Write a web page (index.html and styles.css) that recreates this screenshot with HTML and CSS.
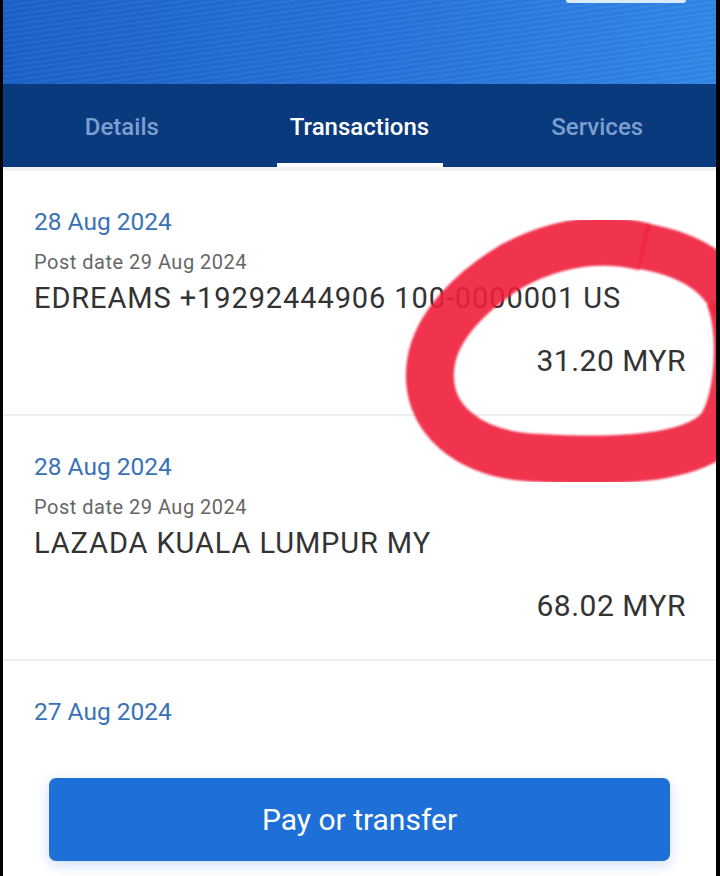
FILE: index.html
```html
<!DOCTYPE html>
<html lang="en">
<head>
    <meta charset="UTF-8">
    <meta name="viewport" content="width=device-width, initial-scale=1.0">
    <title>Card transactions</title>
    <link rel="stylesheet" href="styles.css">
</head>
<body>
    <div class="app">
        <header class="top">
            <div class="top-pill"></div>
        </header>
        <nav class="tabs">
            <a class="tab">Details</a>
            <a class="tab active">Transactions</a>
            <a class="tab">Services</a>
        </nav>
        <main class="list">
            <div class="row">
                <div class="date">28 Aug 2024</div>
                <div class="post">Post date 29 Aug 2024</div>
                <div class="merchant">EDREAMS +19292444906 100-0000001 US</div>
                <div class="amount">31.20 MYR</div>
            </div>
            <div class="row">
                <div class="date">28 Aug 2024</div>
                <div class="post">Post date 29 Aug 2024</div>
                <div class="merchant">LAZADA KUALA LUMPUR MY</div>
                <div class="amount">68.02 MYR</div>
            </div>
            <div class="row">
                <div class="date">27 Aug 2024</div>
            </div>
        </main>
        <footer class="actions">
            <button class="pay">Pay or transfer</button>
        </footer>

        <!-- hand drawn marker ring over the first amount -->
        <svg class="scribble" viewBox="3 0 713 876" width="713" height="876">
            <defs>
                <filter id="soft"><feGaussianBlur stdDeviation="1.3"/></filter>
            </defs>
            <g filter="url(#soft)" fill="none" stroke="#f0203c" stroke-opacity="0.9" stroke-linecap="butt" stroke-linejoin="round">
                <path stroke-width="48" d="M 645 247 C 600 236, 555 243, 512 266 C 472 290, 437 325, 431 362 C 422 418, 468 456, 540 458 C 612 462, 686 460, 717 432 C 740 408, 744 330, 729 296"/>
                <path stroke-width="46" d="M 744 330 C 730 280, 700 256, 642 246"/>
            </g>
        </svg>
    </div>
</body>
</html>
```

FILE: styles.css
```css
body {
    margin: 0;
    padding: 0;
    background: #000;
    font-family: Roboto, "Noto Sans", Arial, sans-serif;
}
.app {
    position: relative;
    width: 713px;
    height: 876px;
    margin-left: 3px;
    background: #fff;
    display: flex;
    flex-direction: column;
    overflow: hidden;
}
/* Cabecera azul */
.top {
    height: 84px;
    flex-shrink: 0;
    display: flex;
    justify-content: flex-end;
    align-items: flex-start;
    padding-right: 30px;
    box-sizing: border-box;
    background:
        repeating-linear-gradient(172deg, rgba(255, 255, 255, 0.03) 0 2px, rgba(0, 0, 0, 0.03) 2px 5px),
        linear-gradient(90deg, #1c62c8 0%, #2874dc 55%, #3388e8 100%);
}
.top-pill {
    width: 120px;
    height: 3px;
    background: #dcecff;
    border-radius: 0 0 5px 5px;
}
.tabs {
    height: 83px;
    flex-shrink: 0;
    display: flex;
    background: #093a7d;
}
.tab {
    flex: 1;
    display: flex;
    align-items: center;
    justify-content: center;
    padding-top: 3px;
    position: relative;
    font-size: 24px;
    font-weight: 500;
    color: #7c9fd0;
}
.tab.active {
    color: #fff;
}
.tab.active::after {
    content: "";
    position: absolute;
    bottom: 0;
    left: 50%;
    width: 166px;
    margin-left: -83px;
    height: 4px;
    background: #fff;
}
.list {
    flex: 1;
    overflow: hidden;
    border-top: 4px solid #f1f1f1;
}
.row {
    padding: 37px 30px 38px 31px;
    border-bottom: 2px solid #eeeeee;
}
.date {
    font-size: 24.5px;
    line-height: 28px;
    color: #3a72b6;
}
.post {
    margin-top: 14px;
    font-size: 20px;
    line-height: 24px;
    letter-spacing: 0.5px;
    color: #666;
}
.merchant {
    margin-top: 9px;
    font-size: 29px;
    line-height: 30px;
    letter-spacing: 0.9px;
    color: #333;
}
.amount {
    margin-top: 33px;
    font-size: 30px;
    line-height: 30px;
    letter-spacing: 0.5px;
    text-align: right;
    color: #333;
}
.actions {
    flex-shrink: 0;
    padding: 18px 46px 15px;
    background: #fff;
}
.pay {
    display: block;
    width: 100%;
    height: 83px;
    border: none;
    border-radius: 7px;
    background: #1e6fd8;
    color: #fff;
    font-family: Roboto, Arial, sans-serif;
    font-size: 30px;
    box-shadow: 0 4px 14px rgba(30, 111, 216, 0.22);
}
.scribble {
    position: absolute;
    left: 0;
    top: 0;
    pointer-events: none;
}
```
